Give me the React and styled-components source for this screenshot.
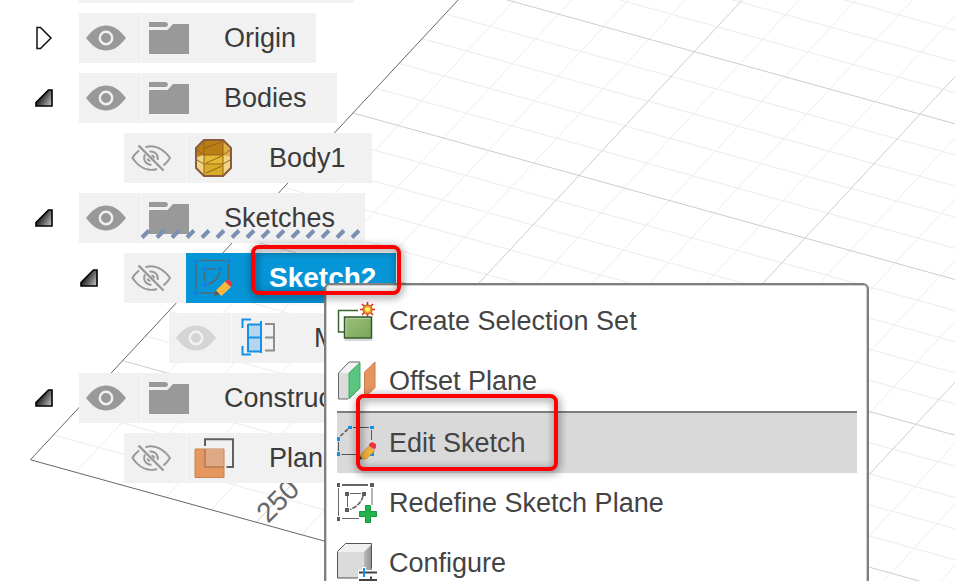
import React from "react"
import styled, { createGlobalStyle, css } from "styled-components"

const GlobalStyle = createGlobalStyle`
  * {
    box-sizing: border-box;
  }
  body {
    margin: 0;
    background: #fff;
    font-family: "Liberation Sans", Arial, sans-serif;
    font-size: 27px;
    color: #3b3b3b;
  }
  button {
    border: 0;
    padding: 0;
    background: none;
    font: inherit;
    color: inherit;
    text-align: left;
    cursor: pointer;
  }
`

const Workspace = styled.main`
  position: relative;
  height: 100vh;
  overflow: hidden;
`

const Canvas = styled.svg`
  position: absolute;
  top: 0;
  left: 0;
  width: 100%;
  height: 100%;
`

const Browser = styled.ul`
  position: relative;
  display: flex;
  flex-direction: column;
  gap: 10px;
  margin: 0;
  padding: 0;
  list-style: none;
`

const RootBar = styled.li`
  width: 275px;
  height: 3px;
  margin-left: 79px;
  background: #f1f1f1;
`

const Row = styled.li`
  display: flex;
  height: 50px;
  padding-left: ${(props) => props.$level * 45}px;
`

const Toggle = styled.div`
  display: flex;
  flex: none;
  align-items: center;
  width: 79px;
  padding-left: 35px;
  button {
    display: flex;
  }
`

const Visibility = styled.button`
  display: flex;
  flex: none;
  align-items: center;
  width: 62px;
  padding-left: 7px;
  background: #f1f1f1;
  color: ${(props) => (props.$dim ? "#d4d4d4" : "#999")};
`

const Node = styled.button`
  position: relative;
  display: flex;
  align-items: center;
  gap: 35px;
  padding-left: 7px;
  padding-right: ${(props) => props.$trail}px;
  border-left: 1px solid #f8f8f8;
  background: #f1f1f1;
  line-height: 50px;
  white-space: nowrap;
  ${(props) =>
    props.$selected &&
    css`
      border-color: #0696d7;
      background: #0696d7;
      color: #fff;
      font-size: 28px;
      font-weight: bold;
    `}
`

const Stripes = styled.svg`
  position: absolute;
  left: -2px;
  bottom: 4px;
`

const Menu = styled.div`
  position: absolute;
  top: 283px;
  left: 324px;
  width: 545px;
  padding: 6px 10px 6px 11px;
  border: 2px solid #7f7f7f;
  border-radius: 6px;
  background: #fff;
  box-shadow: inset 0 0 0 1px #d0d0d0;
  color: #444;
`

const MenuItem = styled.button`
  display: flex;
  align-items: center;
  gap: 12px;
  width: 100%;
  height: 60px;
  background: ${(props) => (props.$active ? "#d9d9d9" : "none")};
`

const Separator = styled.hr`
  height: 2px;
  margin: 0;
  border: 0;
  background: #7c7f7c;
`

const Marker = styled.div`
  position: absolute;
  top: ${(props) => props.$top}px;
  left: ${(props) => props.$left}px;
  width: ${(props) => props.$width}px;
  height: ${(props) => props.$height}px;
  border: 4px solid #fe0000;
  border-radius: 8px;
  filter: drop-shadow(1px 2px 4px rgba(0, 0, 0, 0.6));
  pointer-events: none;
`

// Ground plane: one step along each axis of the grid
const ORIGIN = [353, 113]
const U = [45.2, 12.5]
const V = [-23.04, 24.77]

const at = (i, j) => [ORIGIN[0] + i * U[0] + j * V[0], ORIGIN[1] + i * U[1] + j * V[1]]

const GridLine = ({ from, to, color }) => (
  <line x1={from[0]} y1={from[1]} x2={to[0]} y2={to[1]} stroke={color} />
)

const Ground = () => {
  const minor = []
  const major = []
  for (let j = -29; j < 14; j++) {
    const list = j % 5 === 0 ? major : minor
    list.push(<GridLine key={`u${j}`} from={at(0, j)} to={at(40, j)} color={j % 5 === 0 ? "#cdcdcd" : "#ececec"} />)
  }
  for (let i = 1; i < 40; i++) {
    const list = i % 5 === 0 ? major : minor
    list.push(<GridLine key={`v${i}`} from={at(i, -29)} to={at(i, 14)} color={i % 5 === 0 ? "#cdcdcd" : "#ececec"} />)
  }
  return (
    <Canvas aria-hidden="true">
      {minor}
      {major}
      <GridLine from={at(0, -29)} to={at(0, 14)} color="#666" />
      <GridLine from={at(0, 14)} to={at(40, 14)} color="#666" />
      <text x="268" y="524" fontSize="28" fill="#666" transform="rotate(-45 268 524)">250</text>
    </Canvas>
  )
}

const Collapsed = () => (
  <svg width="18" height="24" viewBox="0 0 18 24">
    <path d="M2 1.500h3.500L16 12 5.500 22.500H2z" fill="#fff" stroke="#111" strokeWidth="1.500" />
  </svg>
)

const Expanded = () => (
  <svg width="18" height="18" viewBox="0 0 18 18">
    <defs>
      <linearGradient id="arrow" x1="0" y1="0.2" x2="1" y2="0.8">
        <stop offset="0.3" stopColor="#222" />
        <stop offset="1" stopColor="#bbb" />
      </linearGradient>
    </defs>
    <path d="M1 13.500L13.500 1H17v16H1z" fill="url(#arrow)" stroke="#000" strokeWidth="1.600" />
  </svg>
)

const Eye = () => (
  <svg width="40" height="26" viewBox="0 0 40 26">
    <path d="M0 13C7 4 13 0.500 20 0.500S33 4 40 13C33 22 27 25.500 20 25.500S7 22 0 13z" fill="currentColor" />
    <circle cx="20" cy="13" r="6.200" fill="currentColor" stroke="#f1f1f1" strokeWidth="2.400" />
  </svg>
)

const EyeOff = () => (
  <svg width="40" height="28" viewBox="0 0 40 28" fill="none" stroke="currentColor" strokeWidth="2">
    <path d="M7.500 1.500L32.500 26.500" strokeWidth="2.400" />
    <path d="M14.500 3.200C23 0.500 32 4.500 39 14c-2 3.200-4.200 5.500-6.500 7.400" />
    <path d="M8 6.500C5.500 8.500 3 11 1.500 14c6.500 9.500 15.500 13.800 24.500 11" />
    <path d="M18.500 7.500c5-.8 9 3 8.200 8.300M14 10.500c-2.500 5.500 1 10.500 6.500 10.200" />
    <path d="M20.500 11.500c1.500.3 2.500 1.300 2.700 2.800M16.500 14.500c.3 1.500 1.200 2.300 2.700 2.600" />
  </svg>
)

const Folder = () => (
  <svg width="40" height="40" viewBox="0 0 40 40" fill="#999">
    <path d="M0 4h16.500q2.500.3 2.500 2.500T16.500 9H0z" />
    <path d="M0 12h18.500l5.500-6H40v30H0z" />
  </svg>
)

const Body = () => (
  <svg width="40" height="40" viewBox="0 0 40 40">
    <defs>
      <linearGradient id="gold" x1="0" y1="0" x2="1" y2="0">
        <stop offset="0" stopColor="#f6e3a0" />
        <stop offset="0.3" stopColor="#dcae2c" />
        <stop offset="0.750" stopColor="#d9a91f" />
        <stop offset="1" stopColor="#f3dc8c" />
      </linearGradient>
    </defs>
    <path d="M10 2h19l8 8v20l-8 8H10l-8-8V10z" fill="url(#gold)" />
    <path d="M10 3h19v14H10L3 21V10z" fill="#b97f16" />
    <path d="M29 3l7 8v8l-7-2z" fill="#ddb043" />
    <path d="M3 19l7-2v20l-7-7z" fill="#f0d587" />
    <path d="M29 17l7 2v11l-7 7z" fill="#f0d587" />
    <path d="M10 17h19v10H10z" fill="#e3ba32" />
    <path d="M10 27h19v10H10z" fill="#d9ab26" />
    <path
      d="M10 3v34M29 3v34M10 17h19M3 22l7 4h19l7-4M12 25l16-7M12 35l16-7M3 12l7 5M29 17l7-5M11 10l17-6"
      fill="none"
      stroke="#94631a"
      strokeWidth="1"
    />
    <path d="M10 2h19l8 8v20l-8 8H10l-8-8V10z" fill="none" stroke="#8c5a3c" strokeWidth="2" strokeLinejoin="round" />
  </svg>
)

const Pencil = () => (
  <g>
    <path d="M20 38l2-6.500 5 4.500z" fill="#5b5b5b" />
    <path d="M22 32.500l9-9 6 5.500-9.500 9z" fill="#fbb83c" />
    <path d="M31 23.500a4 4 0 1 1 6 5.500z" fill="#ee3340" />
  </g>
)

const SketchSelected = () => (
  <svg width="40" height="40" viewBox="0 0 40 40">
    <path
      d="M5 2.500h26M2 6v26M34.500 6v16M5 35h16M14 11h8M10.500 14v9M26 14q-2 8-12 12.500"
      fill="none"
      stroke="#526b7a"
      strokeWidth="1.600"
    />
    <path d="M0 1h4v4H0zM33 1h4v4h-4zM0 33h4v4H0zM9 9h4v4H9zM24 9h4v4h-4zM9 25h4v4H9z" fill="#187fd8" />
    <Pencil />
  </svg>
)

const Mirror = () => (
  <svg width="40" height="40" viewBox="0 0 40 40" fill="none">
    <path d="M9 6.500h12v27H9z" fill="#b5d6f0" />
    <path d="M12 1.500H3.500V10M3.500 28v8.500H12M9 6.500h12M9 6v27.500h12M9 19.500h12M22 3v32" stroke="#1590ea" strokeWidth="2" />
    <path d="M26 6h9v26.500h-9M26 19.500h9" stroke="#8f8f8f" strokeWidth="2" />
  </svg>
)

const Plane = () => (
  <svg width="40" height="40" viewBox="0 0 40 40">
    <path d="M11 8V1.200h28V29h-6.500" fill="none" stroke="#606060" strokeWidth="2" />
    <path d="M1 11h29v28.500H1z" fill="#e6975f" stroke="#c9824f" />
    <path d="M11 11h18.500v18H11z" fill="#e0a985" />
    <path d="M11 11v18h19" fill="none" stroke="#b57a52" strokeWidth="1.500" />
  </svg>
)

const CreateSet = () => (
  <svg width="40" height="40" viewBox="0 0 40 40">
    <defs>
      <linearGradient id="leafy" x1="0" y1="0" x2="1" y2="1">
        <stop offset="0" stopColor="#9bc07b" />
        <stop offset="1" stopColor="#7ba65a" />
      </linearGradient>
    </defs>
    <path d="M21 9.500H1.500V31H7" fill="none" stroke="#3a6330" strokeWidth="1.500" />
    <path d="M7.500 39h28" stroke="#d8d8d8" strokeWidth="2" />
    <path d="M7.500 16h27v21h-27z" fill="url(#leafy)" stroke="#33592c" strokeWidth="1.500" />
    <path d="M9 35.500V17.500h24" fill="none" stroke="#b5d19d" />
    <path d="M30.500 1v15M23 8.500h15M25 3l11 11M36 3L25 14" stroke="#d4311c" strokeWidth="1.600" />
    <circle cx="30.500" cy="8.500" r="4.600" fill="#f59b1a" stroke="#cf4a16" />
    <circle cx="30.500" cy="8.500" r="2.400" fill="#fff27a" />
  </svg>
)

const OffsetPlane = () => (
  <svg width="40" height="40" viewBox="0 0 40 40">
    <path d="M1.500 12L12 1h10.500L12 12z" fill="#f3f3f3" />
    <path d="M1.500 12H12v26H1.500z" fill="#dcdcdc" />
    <path d="M11 38H1.500V12L12 1h11" fill="none" stroke="#666" />
    <path d="M12 12L23 1.500v25.500L12 38z" fill="#5ac57f" stroke="#3fae66" />
    <path d="M27.500 11L38 1v25.500L27.500 37z" fill="#e5955f" stroke="#c97d4b" />
  </svg>
)

const EditSketch = () => (
  <svg width="40" height="40" viewBox="0 0 40 40">
    <path d="M16 4.500h16M34.500 7v10M1.500 19v9M4.500 31.500h16" fill="none" stroke="#555" />
    <path d="M3.500 13l8-7.500" stroke="#555" strokeWidth="1.500" strokeDasharray="4 2" />
    <path d="M11 3h4v3h-4zM33 3h4v3h-4zM0 14h3v4H0zM0 29h3v4H0zM33 29h4v4h-4z" fill="#1590ea" />
    <path d="M22 37l1-4.500 4 3z" fill="#444" />
    <path d="M23.500 32l8-8.500 6 4.500-8.500 8q-4 1-5.500-4z" fill="#f2b13c" stroke="#d39a33" />
    <path d="M32 23c-.5-3 3-5 5.500-3 2.500 1.500 2 5 0 6.500z" fill="#ee3340" />
  </svg>
)

const RedefinePlane = () => (
  <svg width="40" height="40" viewBox="0 0 40 40">
    <path d="M5 2h26" stroke="#666" strokeWidth="2" />
    <path d="M1.500 5v28M35 5v17M5 35.500h17M13 10.500h11M10.500 13v11" stroke="#666" />
    <path d="M26 13q-2 9-13 13.500" fill="none" stroke="#666" strokeWidth="1.600" strokeDasharray="5 1" />
    <path d="M0 0h3v4H0zM33 0h4v4h-4zM0 34h3v4H0zM8 9h4v4H8zM25 9h4v4h-4zM8 25h4v4H8z" fill="#5c5c5c" />
    <path d="M28.500 22.500h5v6h6v5h-6v6h-5v-6h-6v-5h6z" fill="#25b14c" stroke="#149a3c" />
  </svg>
)

const Configure = () => (
  <svg width="40" height="40" viewBox="0 0 40 40">
    <defs>
      <linearGradient id="side" x1="0" y1="0" x2="1" y2="0">
        <stop offset="0" stopColor="#bbb" />
        <stop offset="1" stopColor="#8f8f8f" />
      </linearGradient>
    </defs>
    <path d="M1 9l8-8h26l-8 8z" fill="#f0f0f0" />
    <path d="M1 9h26v26H1z" fill="#dadada" />
    <path d="M27 9l8-8v26l-8 8z" fill="url(#side)" />
    <path d="M22 35H0.500V8.500L8.500 0.500H34.500V25" fill="none" stroke="#555" />
    <path d="M21 27h4v-3h4v3h11v13H21z" fill="#fff" />
    <path d="M22 29.500h18" stroke="#444" strokeWidth="2" />
    <path d="M27 25v9" stroke="#1590ea" strokeWidth="2" />
    <path d="M22 37h18M34 33.500v6" stroke="#444" strokeWidth="2" />
  </svg>
)

const nodes = [
  { name: "Origin", level: 0, icon: Folder, toggle: "closed", trail: 20 },
  { name: "Bodies", level: 0, icon: Folder, toggle: "open", trail: 30 },
  { name: "Body1", level: 1, icon: Body, hidden: true, trail: 26 },
  { name: "Sketches", level: 0, icon: Folder, toggle: "open", trail: 30, stripes: true },
  { name: "Sketch2", level: 1, icon: SketchSelected, toggle: "open", hidden: true, trail: 20, selected: true },
  { name: "Mirror", level: 2, icon: Mirror, dim: true, trail: 30 },
  { name: "Construction", level: 0, icon: Folder, toggle: "open", trail: 30 },
  { name: "Plane1", level: 1, icon: Plane, hidden: true, trail: 26 },
]

const commands = [
  { name: "Create Selection Set", icon: CreateSet },
  { name: "Offset Plane", icon: OffsetPlane },
  { name: "Edit Sketch", icon: EditSketch, active: true },
  { name: "Redefine Sketch Plane", icon: RedefinePlane },
  { name: "Configure", icon: Configure },
]

const TreeNode = ({ node }) => {
  const Icon = node.icon
  return (
    <Row $level={node.level}>
      <Toggle>
        {node.toggle && (
          <button aria-label={`Toggle ${node.name}`} aria-expanded={node.toggle === "open"}>
            {node.toggle === "open" ? <Expanded /> : <Collapsed />}
          </button>
        )}
      </Toggle>
      <Visibility $dim={node.dim} aria-label={`Visibility of ${node.name}`}>
        {node.hidden ? <EyeOff /> : <Eye />}
      </Visibility>
      <Node $selected={node.selected} $trail={node.trail}>
        <Icon />
        {node.name}
        {node.stripes && (
          <Stripes width="222" height="10" viewBox="0 0 222 10">
            {Array.from({ length: 15 }, (_, i) => (
              <path key={i} d={`M${i * 15 + 2} 8.500l7-7`} stroke="#7a8fb2" strokeWidth="4" />
            ))}
          </Stripes>
        )}
      </Node>
    </Row>
  )
}

const App = () => {
  return (
    <Workspace>
      <GlobalStyle />
      <Ground />
      <Browser>
        <RootBar />
        {nodes.map((node) => (
          <TreeNode key={node.name} node={node} />
        ))}
      </Browser>
      <Menu role="menu">
        {commands.map(({ name, icon: Icon, active }) => (
          <React.Fragment key={name}>
            {active && <Separator />}
            <MenuItem role="menuitem" $active={active}>
              <Icon />
              {name}
            </MenuItem>
          </React.Fragment>
        ))}
      </Menu>
      <Marker $top={245} $left={251} $width={150} $height={50} />
      <Marker $top={394} $left={356} $width={202} $height={77} />
    </Workspace>
  )
}

export default App
